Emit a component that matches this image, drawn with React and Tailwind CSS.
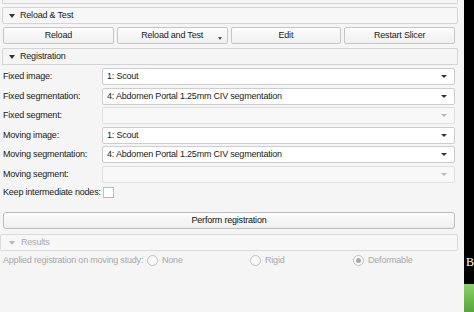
import React from "react";

const font = { fontFamily: '"Liberation Sans", Arial, sans-serif' };

function Tri({ disabled, w = 6, h = 4 }) {
  return (
    <svg width={w} height={h} viewBox={`0 0 ${w} ${h}`} className="shrink-0">
      <path d={`M0 0 L${w} 0 L${w / 2} ${h} Z`} fill={disabled ? "#b8b8b8" : "#333"} />
    </svg>
  );
}

function Header({ title, disabled }) {
  return (
    <div className="ml-[2px] w-[456px] h-[17px] border border-[#d4d4d4] rounded-[2px] bg-[#f7f7f7] flex items-center">
      <div className="w-[15px] flex justify-center pl-[2px]">
        <Tri disabled={disabled} />
      </div>
      <span className={disabled ? "text-[#a8a8a8] pl-[2px]" : "text-[#1a1a1a] pl-[2px]"}>{title}</span>
    </div>
  );
}

function Btn({ children, menu }) {
  return (
    <div className="relative h-[17px] border border-[#c6c6c6] rounded-[2px] bg-gradient-to-b from-[#fdfdfd] to-[#f0f0f0] flex items-center justify-center text-[#1a1a1a]">
      {children}
      {menu && (
        <svg width="4" height="3" viewBox="0 0 4 3" className="absolute right-[5px] bottom-[3px]">
          <path d="M0 0 L4 0 L2 3 Z" fill="#555" />
        </svg>
      )}
    </div>
  );
}

function Combo({ value, disabled }) {
  return (
    <div className={"w-[353px] h-[17px] border rounded-[2px] flex items-center pl-[4px] pr-[7px] " + (disabled ? "border-[#e0e0e0] bg-[#f8f8f8]" : "border-[#cdcdcd] bg-white")}>
      <span className="flex-1 text-[#1a1a1a] whitespace-nowrap">{value}</span>
      <Tri disabled={disabled} w={6} h={3} />
    </div>
  );
}

function Row({ label, value, disabled }) {
  return (
    <div className="flex items-center h-[17px]">
      <div className="w-[102px] pl-[3px] text-[#1a1a1a] whitespace-nowrap">{label}</div>
      <Combo value={value} disabled={disabled} />
    </div>
  );
}

function Radio({ checked, label }) {
  return (
    <div className="flex items-center gap-[4px]">
      <div className="w-[11px] h-[11px] rounded-full border border-[#c0c0c0] bg-[#fafafa] flex items-center justify-center">
        {checked && <div className="w-[5px] h-[5px] rounded-full bg-[#a8a8a8]" />}
      </div>
      <span>{label}</span>
    </div>
  );
}

export default function App() {
  return (
    <div className="w-[474px] h-[312px] overflow-hidden flex bg-[#f5f5f5] text-[9px] tracking-[-0.2px] leading-none" style={font}>
      <div className="w-[464px] flex flex-col">
        <div className="ml-[2px] w-[456px] h-[4px] border border-t-0 border-[#d4d4d4] rounded-b-[2px]" />
        <div className="mt-[3px]">
          <Header title="Reload & Test" />
        </div>
        <div className="mt-[3px] ml-[3px] w-[452px] grid grid-cols-4 gap-[3px]">
          <Btn>Reload</Btn>
          <Btn menu>Reload and Test</Btn>
          <Btn>Edit</Btn>
          <Btn>Restart Slicer</Btn>
        </div>
        <div className="mt-[4px]">
          <div className="ml-[2px] w-[456px] border-x border-t border-[#d4d4d4] rounded-t-[2px]">
            <div className="h-[16px] flex items-center border-b border-[#d4d4d4]">
              <div className="w-[15px] flex justify-center pl-[2px]">
                <Tri />
              </div>
              <span className="text-[#1a1a1a] pl-[2px]">Registration</span>
            </div>
          </div>
        </div>
        <div className="mt-[3px] flex flex-col gap-[2.5px]">
          <Row label="Fixed image:" value="1: Scout" />
          <Row label="Fixed segmentation:" value="4: Abdomen Portal 1.25mm CIV segmentation" />
          <Row label="Fixed segment:" value="" disabled />
          <Row label="Moving image:" value="1: Scout" />
          <Row label="Moving segmentation:" value="4: Abdomen Portal 1.25mm CIV segmentation" />
          <Row label="Moving segment:" value="" disabled />
          <div className="flex items-center h-[14px]">
            <div className="w-[103px] pl-[3px] text-[#1a1a1a] whitespace-nowrap">Keep intermediate nodes:</div>
            <div className="w-[11px] h-[11px] border border-[#bcbcbc] bg-white" />
          </div>
        </div>
        <div className="mt-[13px] ml-[3px] w-[452px]">
          <div className="h-[17px] border border-[#bdbdbd] rounded-[3px] bg-gradient-to-b from-[#fdfdfd] to-[#efefef] flex items-center justify-center text-[#111]">
            Perform registration
          </div>
        </div>
        <div className="mt-[5px]">
          <div className="w-[458px] h-[17px] border border-[#dadada] rounded-[2px] bg-[#f7f7f7] flex items-center">
            <div className="w-[17px] flex justify-center pl-[4px]">
              <Tri disabled />
            </div>
            <span className="text-[#ababab] pl-[3px]">Results</span>
          </div>
        </div>
        <div className="mt-[2px] h-[14px] flex items-center text-[#a8a8a8] pl-[3px]">
          <span className="w-[144px] whitespace-nowrap">Applied registration on moving study:</span>
          <div className="w-[103px]"><Radio label="None" /></div>
          <div className="w-[103px]"><Radio label="Rigid" /></div>
          <Radio checked label="Deformable" />
        </div>
      </div>
      <div className="flex-1 bg-black flex flex-col overflow-hidden">
        <div className="h-[255px]" />
        <div className="h-[14px] pl-[2px] text-white text-[12px] flex items-center" style={{ fontFamily: '"Liberation Serif", serif' }}>B</div>
        <div className="h-[15px]" />
        <div className="flex-1 bg-gradient-to-b from-[#8fd06a] via-[#6fbb4c] to-[#5aa53c]" />
      </div>
    </div>
  );
}
